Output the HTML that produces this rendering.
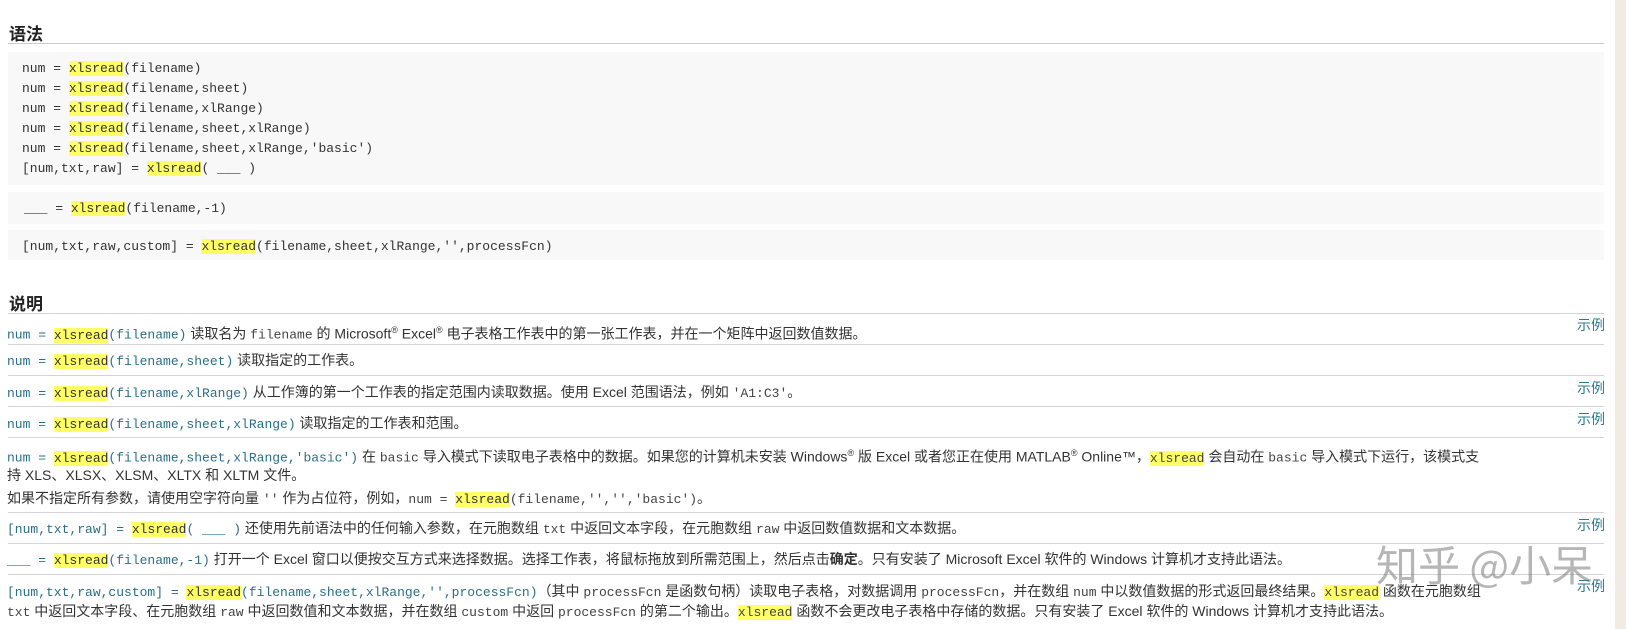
<!DOCTYPE html>
<html><head><meta charset="utf-8"><style>
body{margin:0;width:1626px;height:629px;background:#fff;position:relative;overflow:hidden;font-family:"Liberation Sans","Noto Sans CJK SC",sans-serif;color:#333}
.a{position:absolute;white-space:nowrap}
.h{font-size:17px;font-weight:bold;color:#222;left:9px}
.hl{position:absolute;left:8px;width:1596px;height:1px;background:#ccc}
.bg{position:absolute;left:8px;width:1596px;background:#f8f8f8}
.c{font-family:"Liberation Mono",monospace;font-size:13px;color:#333;left:22px;line-height:16px}
.y{background:#ffff66;color:#333}
.d{font-size:14px;left:7px;line-height:16px;color:#333}
.m{font-family:"Liberation Mono",monospace;font-size:13px;color:#2a6f88}
.mt{font-family:"Liberation Mono",monospace;font-size:13px;color:#444}
.ex{font-size:14px;color:#2a7b8c;left:1577px}
.rl{position:absolute;left:8px;width:1596px;height:1px;background:#d4d4d4}
sup{font-size:9px}
</style></head><body>
<div style="position:absolute;left:1615px;top:0;width:11px;height:629px;background:#f1ebe3"></div>
<div class="a h" style="top:20px">语法</div>
<div class="hl" style="top:43px"></div>
<div class="bg" style="top:52px;height:133px"></div>
<div class="bg" style="top:192px;height:32px"></div>
<div class="bg" style="top:230px;height:30px"></div>
<div class="a c" style="top:61px">num = <span class="y">xlsread</span>(filename)</div>
<div class="a c" style="top:81px">num = <span class="y">xlsread</span>(filename,sheet)</div>
<div class="a c" style="top:101px">num = <span class="y">xlsread</span>(filename,xlRange)</div>
<div class="a c" style="top:121px">num = <span class="y">xlsread</span>(filename,sheet,xlRange)</div>
<div class="a c" style="top:141px">num = <span class="y">xlsread</span>(filename,sheet,xlRange,'basic')</div>
<div class="a c" style="top:161px">[num,txt,raw] = <span class="y">xlsread</span>( ___ )</div>
<div class="a c" style="top:201px;left:24px">___  = <span class="y">xlsread</span>(filename,-1)</div>
<div class="a c" style="top:239px">[num,txt,raw,custom] = <span class="y">xlsread</span>(filename,sheet,xlRange,'',processFcn)</div>

<div class="a h" style="top:290px">说明</div>
<div class="rl" style="top:313px"></div>
<div class="a d" style="top:322px"><span class="m">num = <span class="y">xlsread</span>(filename)</span> 读取名为 <span class="mt">filename</span> 的 Microsoft<sup>®</sup> Excel<sup>®</sup> 电子表格工作表中的第一张工作表，并在一个矩阵中返回数值数据。</div>
<div class="a ex" style="top:315px">示例</div>
<div class="rl" style="top:344px"></div>
<div class="a d" style="top:352px"><span class="m">num = <span class="y">xlsread</span>(filename,sheet)</span> 读取指定的工作表。</div>
<div class="rl" style="top:375px"></div>
<div class="a d" style="top:384px"><span class="m">num = <span class="y">xlsread</span>(filename,xlRange)</span> 从工作簿的第一个工作表的指定范围内读取数据。使用 Excel 范围语法，例如 <span class="mt">'A1:C3'</span>。</div>
<div class="a ex" style="top:378px">示例</div>
<div class="rl" style="top:406px"></div>
<div class="a d" style="top:415px"><span class="m">num = <span class="y">xlsread</span>(filename,sheet,xlRange)</span> 读取指定的工作表和范围。</div>
<div class="a ex" style="top:409px">示例</div>
<div class="rl" style="top:437px"></div>
<div class="a d" style="top:445px"><span class="m">num = <span class="y">xlsread</span>(filename,sheet,xlRange,'basic')</span> 在 <span class="mt">basic</span> 导入模式下读取电子表格中的数据。如果您的计算机未安装 Windows<sup>®</sup> 版 Excel 或者您正在使用 MATLAB<sup>®</sup> Online™，<span class="mt y">xlsread</span> 会自动在 <span class="mt">basic</span> 导入模式下运行，该模式支</div>
<div class="a d" style="top:467px">持 XLS、XLSX、XLSM、XLTX 和 XLTM 文件。</div>
<div class="a d" style="top:490px">如果不指定所有参数，请使用空字符向量 <span class="mt">''</span> 作为占位符，例如，<span class="mt">num = <span class="y">xlsread</span>(filename,'','','basic')</span>。</div>
<div class="rl" style="top:512px"></div>
<div class="a d" style="top:520px"><span class="m">[num,txt,raw] = <span class="y">xlsread</span>( ___ )</span> 还使用先前语法中的任何输入参数，在元胞数组 <span class="mt">txt</span> 中返回文本字段，在元胞数组 <span class="mt">raw</span> 中返回数值数据和文本数据。</div>
<div class="a ex" style="top:515px">示例</div>
<div class="rl" style="top:543px"></div>
<div class="a d" style="top:551px"><span class="m">___  = <span class="y">xlsread</span>(filename,-1)</span> 打开一个 Excel 窗口以便按交互方式来选择数据。选择工作表，将鼠标拖放到所需范围上，然后点击<b>确定</b>。只有安装了 Microsoft Excel 软件的 Windows 计算机才支持此语法。</div>
<div class="rl" style="top:574px"></div>
<div class="a d" style="top:583px"><span class="m">[num,txt,raw,custom] = <span class="y">xlsread</span>(filename,sheet,xlRange,'',processFcn)</span>（其中 <span class="mt">processFcn</span> 是函数句柄）读取电子表格，对数据调用 <span class="mt">processFcn</span>，并在数组 <span class="mt">num</span> 中以数值数据的形式返回最终结果。<span class="mt y">xlsread</span> 函数在元胞数组</div>
<div class="a d" style="top:603px"><span class="mt">txt</span> 中返回文本字段、在元胞数组 <span class="mt">raw</span> 中返回数值和文本数据，并在数组 <span class="mt">custom</span> 中返回 <span class="mt">processFcn</span> 的第二个输出。<span class="mt y">xlsread</span> 函数不会更改电子表格中存储的数据。只有安装了 Excel 软件的 Windows 计算机才支持此语法。</div>
<div class="a ex" style="top:576px">示例</div>
<div class="a" style="left:1376px;top:536px;font-size:42px;line-height:56px;color:rgba(110,110,110,0.5);font-family:'Noto Sans CJK SC',sans-serif">知乎 @小呆</div>
</body></html>
